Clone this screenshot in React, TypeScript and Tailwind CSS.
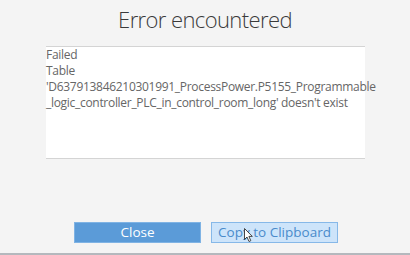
import React from "react";

export default function App() {
  return (
    <div className="relative w-[410px] h-[255px] bg-[#f4f4f4] overflow-hidden flex flex-col" style={{ fontFamily: '"Open Sans", "Noto Sans", sans-serif' }}>
      <div className="h-[46px] flex justify-center pt-[4px]">
        <span className="text-[22px] leading-[30px] font-light tracking-[-0.6px] text-[#3a3a3a]">Error encountered</span>
      </div>
      <div className="ml-[46px] w-[319px] h-[113px] bg-white border-t border-b border-[#d4d4d4] text-[12px] leading-[16px] text-[#666666] tracking-[-0.3px]">
        <div>Failed</div>
        <div>Table</div>
        <div className="whitespace-nowrap">'D637913846210301991_ProcessPower.P5155_Programmable</div>
        <div className="whitespace-nowrap">_logic_controller_PLC_in_control_room_long' doesn't exist</div>
      </div>
      <div className="flex gap-[10px] ml-[74px] mt-[63px]">
        <div className="w-[127px] h-[21px] bg-[#5b9bd8] border border-[#7fb3e4] flex items-center justify-center text-white text-[13.5px]">Close</div>
        <div className="w-[127px] h-[21px] bg-[#cde4fa] border border-[#86b8e8] flex items-center justify-center text-[#4a8bcb] text-[13.5px]">Copy to Clipboard</div>
      </div>
      <div className="absolute left-0 right-0 bottom-0 h-[2px] bg-[#b4b8bd]" />
      <svg className="absolute left-[244px] top-[228px]" width="10" height="15" viewBox="0 0 10 15">
        <path d="M0.5 0.5 L0.5 11.5 L3 9 L5 13.5 L6.8 12.7 L4.9 8.4 L8.3 8.4 Z" fill="#ffffff" stroke="#333333" strokeWidth="0.9" strokeLinejoin="round" />
      </svg>
    </div>
  );
}
